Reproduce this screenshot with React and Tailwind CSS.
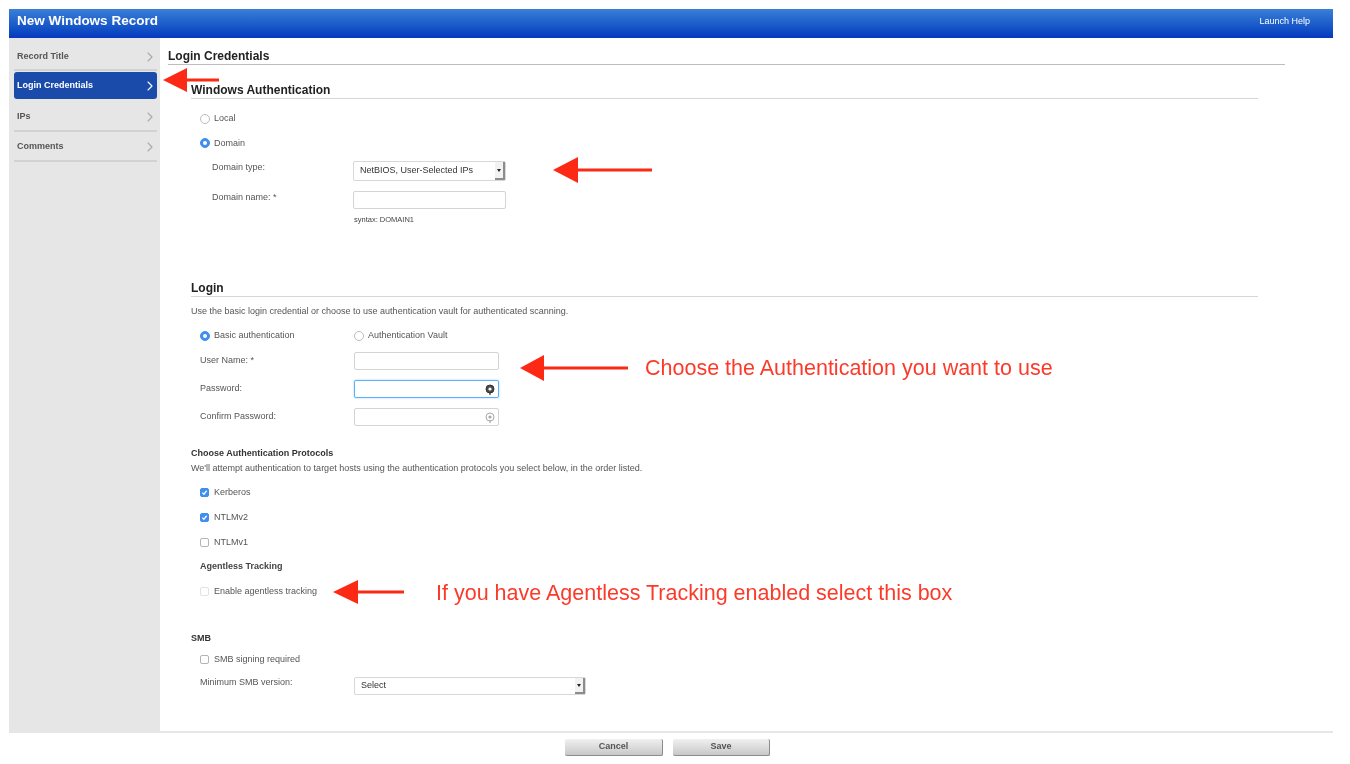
import React from 'react'
import { ChevronRight } from 'lucide-react'

const navItems = [
  { label: 'Record Title' },
  { label: 'Login Credentials', active: true },
  { label: 'IPs' },
  { label: 'Comments' },
]

const Arrow = ({ x, y, length, head, tall }) => (
  <svg
    className="absolute"
    style={{ left: x, top: y - tall / 2 }}
    width={length}
    height={tall}
    viewBox={`0 0 ${length} ${tall}`}
  >
    <path d={`M0 ${tall / 2} L${head} 0 L${head} ${tall / 2 - 1.5} L${length} ${tall / 2 - 1.5} L${length} ${tall / 2 + 1.5} L${head} ${tall / 2 + 1.5} L${head} ${tall} Z`} fill="#fc2a14" />
  </svg>
)

const Radio = ({ checked }) => (
  <span className={`w-[10px] h-[10px] mb-[1px] rounded-full flex items-center justify-center shrink-0 border ${checked ? 'bg-[#3f8ef0] border-[#3f8ef0]' : 'bg-white border-[#bcbcbc]'}`}>
    {checked && <span className="w-[4px] h-[4px] rounded-full bg-white" />}
  </span>
)

const Check = ({ checked, faint }) => (
  <span className={`w-[9px] h-[9px] mb-[1px] mr-[1px] rounded-[2px] flex items-center justify-center shrink-0 border ${checked ? 'bg-[#3f8ef0] border-[#3f8ef0]' : faint ? 'bg-white border-[#e2e2e2]' : 'bg-white border-[#b4b4b4]'}`}>
    {checked && (
      <svg width="7" height="7" viewBox="0 0 8 8">
        <path d="M1.5 4.2 L3.3 6 L6.5 2" stroke="white" strokeWidth="1.4" fill="none" />
      </svg>
    )}
  </span>
)

const Eye = ({ dark }) => (
  <svg width="10" height="11" viewBox="0 0 10 11" className="absolute right-[3px] top-[3px]">
    <circle cx="5" cy="5" r="4" fill={dark ? '#4a4a4a' : 'none'} stroke={dark ? '#333' : '#a8a8a8'} strokeWidth="1" />
    <circle cx="5" cy="5" r="1.6" fill={dark ? '#fff' : '#a8a8a8'} />
    <path d="M5 8 V11" stroke={dark ? '#333' : '#a8a8a8'} strokeWidth="1.2" />
  </svg>
)

const Select = ({ value, className }) => (
  <div className={`relative bg-white border border-[#d8d8d8] rounded-[2px] flex items-center pl-[6px] text-[9px] text-[#333] ${className}`}>
    {value}
    <span className="absolute right-0 top-0 bottom-0 w-[10px] bg-[#f2f2f2] border-r-2 border-b-2 border-[#8c8c8c] flex items-center justify-center">
      <span className="w-0 h-0 border-l-[2.5px] border-r-[2.5px] border-t-[3px] border-l-transparent border-r-transparent border-t-[#222]" />
    </span>
  </div>
)

const Input = ({ className, focus, children }) => (
  <div className={`relative h-[18px] bg-white rounded-[2px] ${focus ? 'border border-[#5db0f5] shadow-[0_0_2px_#8cc8f8]' : 'border border-[#d4d4d4]'} ${className}`}>
    {children}
  </div>
)

const Heading = ({ children }) => (
  <div className="h-[17px] border-b border-[#d6d6d6] text-[12px] font-bold text-[#222] leading-[17px] w-[1067px]">
    {children}
  </div>
)

const FieldRow = ({ label, height, indent = 'pl-[9px] w-[163px]', children }) => (
  <div className="flex items-center" style={{ height }}>
    <span className={`text-[9px] text-[#555] ${indent}`}>{label}</span>
    {children}
  </div>
)

const ChoiceRow = ({ height, children }) => (
  <div className="flex items-center gap-[4px] text-[9px] text-[#555] pl-[9px]" style={{ height }}>
    {children}
  </div>
)

const App = () => {
  return (
    <div className="relative w-[1350px] h-[764px] bg-white overflow-hidden blur-[0.7px]" style={{ fontFamily: '"Liberation Sans", Arial, sans-serif' }}>
      <div className="ml-[9px] pt-[9px] w-[1324px] h-[764px] flex flex-col">
        {/* Title bar */}
        <div className="h-[29px] shrink-0 bg-gradient-to-b from-[#3a7fd8] to-[#0638bd] flex items-center justify-between pl-[8px] pr-[23px] pb-[4px] text-white">
          <span className="text-[13.5px] font-bold">New Windows Record</span>
          <span className="text-[9px]">Launch Help</span>
        </div>

        <div className="flex-1 flex min-h-0">
          {/* Left nav */}
          <div className="w-[151px] bg-[#e6e6e6] pt-[3px] pl-[5px] pr-[3px] shrink-0">
            {navItems.map((item) => (
              <div
                key={item.label}
                className={`flex items-center justify-between pl-[3px] text-[9px] font-bold ${item.active ? 'h-[27px] mt-[1px] mb-[3px] pt-[1px] bg-[#1a4bab] text-white rounded-[3px]' : 'h-[30px] pt-[1px] first:pt-[3px] text-[#555] border-b-2 border-[#d2d2d2]'}`}
              >
                {item.label}
                <ChevronRight className={`w-[16px] h-[16px] -mr-[1px] ${item.active ? 'text-white' : 'text-[#aaa]'}`} strokeWidth={1.6} />
              </div>
            ))}
          </div>

          {/* Form */}
          <div className="flex-1 pl-[8px] pt-[8px]">
            <div className="w-[1117px] h-[19px] border-b border-[#bdbdbd] text-[12px] font-bold text-[#222] leading-[20px]">
              Login Credentials
            </div>
            <div className="pl-[23px] pt-[17px]">
              <Heading>Windows Authentication</Heading>
              <div className="mt-[8px]">
                <ChoiceRow height={24}><Radio /> Local</ChoiceRow>
                <ChoiceRow height={25}><Radio checked /> Domain</ChoiceRow>
                <FieldRow label="Domain type:" height={24} indent="pl-[21px] w-[162px]">
                  <Select value="NetBIOS, User-Selected IPs" className="h-[20px] mt-[6px] w-[153px]" />
                </FieldRow>
                <FieldRow label="Domain name: *" height={36} indent="pl-[21px] w-[162px]">
                  <Input className="mt-[3px] w-[153px]" />
                </FieldRow>
                <div className="pl-[163px] text-[7.5px] text-[#444] leading-[8px]">syntax: DOMAIN1</div>
              </div>

              <div className="mt-[56px]">
                <Heading>Login</Heading>
              </div>
              <p className="mt-[9px] text-[9px] text-[#555] leading-[11px]">
                Use the basic login credential or choose to use authentication vault for authenticated scanning.
              </p>
              <div className="mt-[7px] flex items-center h-[24px] pl-[9px] text-[9px] text-[#555]">
                <span className="w-[154px] flex items-center gap-[4px]"><Radio checked /> Basic authentication</span>
                <span className="flex items-center gap-[4px]"><Radio /> Authentication Vault</span>
              </div>
              <FieldRow label="User Name: *" height={26}>
                <Input className="w-[145px]" />
              </FieldRow>
              <FieldRow label="Password:" height={30}>
                <Input focus className="w-[145px]"><Eye dark /></Input>
              </FieldRow>
              <FieldRow label="Confirm Password:" height={26}>
                <Input className="w-[145px]"><Eye /></Input>
              </FieldRow>

              <div className="mt-[18px] text-[9px] font-bold text-[#333] leading-[11px]">Choose Authentication Protocols</div>
              <div className="mt-[4px] text-[9px] text-[#555] leading-[11px]">
                We'll attempt authentication to target hosts using the authentication protocols you select below, in the order listed.
              </div>
              <div className="mt-[6px]">
                <ChoiceRow height={25}><Check checked /> Kerberos</ChoiceRow>
                <ChoiceRow height={25}><Check checked /> NTLMv2</ChoiceRow>
                <ChoiceRow height={25}><Check /> NTLMv1</ChoiceRow>
              </div>
              <div className="pl-[9px] mt-[6px] text-[9px] font-bold text-[#444] leading-[11px]">Agentless Tracking</div>
              <div className="mt-[5px]">
                <ChoiceRow height={30}><Check faint /> Enable agentless tracking</ChoiceRow>
              </div>

              <div className="mt-[26px] text-[9px] font-bold text-[#333] leading-[11px]">SMB</div>
              <div className="mt-[3px]">
                <ChoiceRow height={26}><Check /> SMB signing required</ChoiceRow>
              </div>
              <FieldRow label="Minimum SMB version:" height={20}>
                <Select value="Select" className="h-[18px] mt-[6px] w-[232px]" />
              </FieldRow>
            </div>
          </div>
        </div>

        {/* Footer */}
        <div className="h-[33px] shrink-0 bg-white border-t-2 border-[#e6e6e6] flex items-start justify-center gap-[10px] pt-[6px] pr-[7px]">
          <button className="w-[98px] h-[17px] rounded-[2px] bg-gradient-to-b from-[#f0f0f0] to-[#c8c8c8] border-r border-b border-[#8c8c8c] text-[9px] font-bold text-[#555]">Cancel</button>
          <button className="w-[97px] h-[17px] rounded-[2px] bg-gradient-to-b from-[#f0f0f0] to-[#c8c8c8] border-r border-b border-[#8c8c8c] text-[9px] font-bold text-[#555]">Save</button>
        </div>
      </div>

      {/* Red annotations drawn over the screenshot */}
      <Arrow x={163} y={80} length={56} head={24} tall={24} />
      <Arrow x={553} y={170} length={99} head={25} tall={26} />
      <Arrow x={520} y={368} length={108} head={24} tall={26} />
      <Arrow x={333} y={592} length={71} head={25} tall={24} />
      <span className="absolute left-[645px] top-[356px] text-[21.5px] leading-[24px] text-[#fb3a2a] whitespace-nowrap">Choose the Authentication you want to use</span>
      <span className="absolute left-[436px] top-[581px] text-[21.5px] leading-[24px] text-[#fb3a2a] whitespace-nowrap">If you have Agentless Tracking enabled select this box</span>
    </div>
  )
}

export default App
